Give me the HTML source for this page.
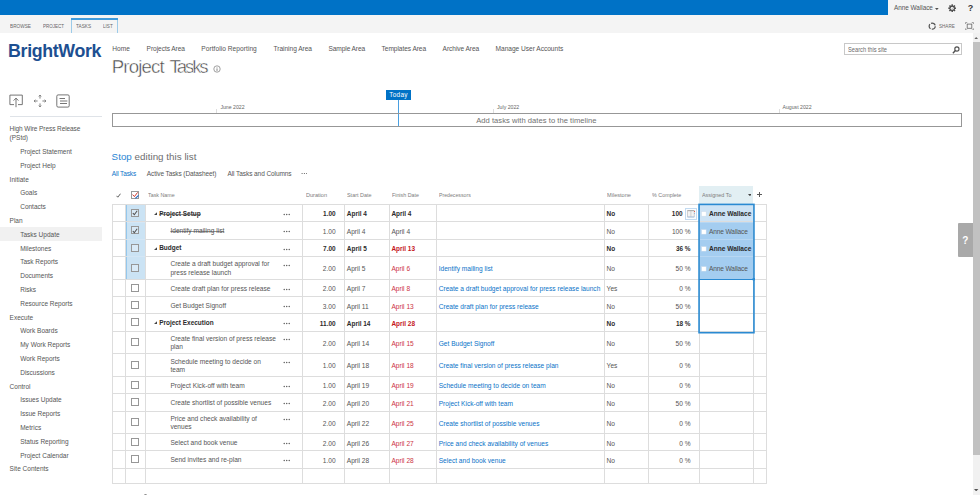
<!DOCTYPE html><html><head><meta charset="utf-8"><title>Project Tasks</title><style>
*{margin:0;padding:0;box-sizing:border-box}
html,body{width:980px;height:495px;overflow:hidden;background:#fff}
body{font-family:"Liberation Sans",sans-serif;position:relative;color:#444}
.a{position:absolute;white-space:nowrap}
.t{position:absolute;white-space:nowrap;height:10px;line-height:10px;font-size:6.6px;color:#555}
.b{font-weight:bold;color:#2b2b2b;font-size:6.45px}
.r{color:#cc3344}
.rb{color:#c4161c;font-weight:bold;font-size:6.45px}
.l{color:#0a73c8}
.h{font-size:6.2px;color:#7c7c7c}
.s{text-decoration:line-through;text-decoration-thickness:0.55px;text-decoration-color:rgba(70,70,70,.6)}
.vl{position:absolute;width:1px;background:#dddddd;top:204px;height:280px}
.hl{position:absolute;height:1px;background:#dddddd;left:112px;width:655px}
.cb{position:absolute;width:8px;height:8px;border:1px solid #979797;background:#fff}
.nv{color:#555;font-size:6.5px}
</style></head><body>
<div class="a" style="left:0;top:0;width:980px;height:33px;background:#f4f4f4"></div>
<div class="a" style="left:0;top:0;width:888px;height:15px;background:#0072c6"></div>
<span class="t " style="top:2.90px;left:894.10px;font-size:6.4px;letter-spacing:-0.038px;color:#555">Anne Wallace</span>
<svg class="a" style="left:935.10px;top:7.70px" width="3.7" height="2.1" viewBox="0 0 3.7 2.1"><path d="M0 0H3.7L1.85 2.1Z" fill="#505050"/></svg>
<svg class="a" style="left:948px;top:3.6px" width="8.4" height="8.4" viewBox="-4.2 -4.2 8.4 8.4"><g fill="#4d4d4d">
<circle r="2.75"/><rect x="-0.75" y="-3.9" width="1.5" height="2" transform="rotate(0)"/><rect x="-0.75" y="-3.9" width="1.5" height="2" transform="rotate(45)"/><rect x="-0.75" y="-3.9" width="1.5" height="2" transform="rotate(90)"/><rect x="-0.75" y="-3.9" width="1.5" height="2" transform="rotate(135)"/><rect x="-0.75" y="-3.9" width="1.5" height="2" transform="rotate(180)"/><rect x="-0.75" y="-3.9" width="1.5" height="2" transform="rotate(225)"/><rect x="-0.75" y="-3.9" width="1.5" height="2" transform="rotate(270)"/><rect x="-0.75" y="-3.9" width="1.5" height="2" transform="rotate(315)"/></g><circle r="1.55" fill="#f4f4f4"/><circle r="0.45" fill="#777"/></svg>
<span class="t " style="top:2.90px;left:967.80px;font-size:9px;font-weight:bold;color:#3a3a3a">?</span>
<svg class="a" style="left:928px;top:22px" width="8.4" height="8.4" viewBox="-4.2 -4.2 8.4 8.4"><circle r="3.05" fill="none" stroke="#555" stroke-width="1.25" stroke-dasharray="5.1 1.3"/></svg>
<span class="t " style="top:21.10px;left:938.90px;font-size:5.9px;transform:scaleX(0.7773);transform-origin:0 50%;color:#6a6a6a">SHARE</span>
<svg class="a" style="left:965px;top:21.5px" width="9" height="8.4" viewBox="0 0 9 8.4"><rect x="2.2" y="2.1" width="4.6" height="4.2" fill="none" stroke="#6e6e6e" stroke-width="0.85"/>
<path d="M0.5 2V0.5H2.2 M6.8 0.5H8.5V2 M8.5 6.4V7.9H6.8 M2.2 7.9H0.5V6.4" fill="none" stroke="#888" stroke-width="0.75"/></svg>
<span class="t " style="top:21.20px;left:9.90px;font-size:5.5px;transform:scaleX(0.8549);transform-origin:0 50%;color:#666">BROWSE</span>
<span class="t " style="top:21.20px;left:43.00px;font-size:5.5px;transform:scaleX(0.8181);transform-origin:0 50%;color:#666">PROJECT</span>
<span class="t " style="top:21.20px;left:76.40px;font-size:5.5px;transform:scaleX(0.8567);transform-origin:0 50%;color:#666">TASKS</span>
<span class="t " style="top:21.20px;left:102.80px;font-size:5.5px;transform:scaleX(0.8351);transform-origin:0 50%;color:#666">LIST</span>
<div class="a" style="left:71px;top:18px;width:47px;height:15px;border:1px solid #9ccbe9;border-top:0;border-bottom:0"></div>
<div class="a" style="left:71px;top:18px;width:47px;height:2px;background:#3f9bdb"></div>
<span class="a" style="left:8.1px;top:43.0px;font-size:17.8px;line-height:1;height:17.8px;font-weight:bold;color:#1d4f91;font-size:17.8px;letter-spacing:-0.358px;">BrightWork</span>
<span class="t " style="top:43.70px;left:112.30px;font-size:6.6px;letter-spacing:0.024px;color:#555">Home</span>
<span class="t " style="top:43.70px;left:146.60px;font-size:6.6px;letter-spacing:-0.066px;color:#555">Projects Area</span>
<span class="t " style="top:43.70px;left:201.30px;font-size:6.6px;letter-spacing:0.049px;color:#555">Portfolio Reporting</span>
<span class="t " style="top:43.70px;left:273.50px;font-size:6.6px;letter-spacing:-0.039px;color:#555">Training Area</span>
<span class="t " style="top:43.70px;left:328.50px;font-size:6.6px;letter-spacing:-0.108px;color:#555">Sample Area</span>
<span class="t " style="top:43.70px;left:381.60px;font-size:6.6px;letter-spacing:-0.071px;color:#555">Templates Area</span>
<span class="t " style="top:43.70px;left:442.60px;font-size:6.6px;letter-spacing:-0.068px;color:#555">Archive Area</span>
<span class="t " style="top:43.70px;left:495.60px;font-size:6.6px;letter-spacing:-0.027px;color:#555">Manage User Accounts</span>
<span class="a" style="left:111.7px;top:55.77px;font-size:18.6px;line-height:21px;height:21px;color:#444;-webkit-text-stroke:0.45px #fff;font-size:18.6px;letter-spacing:-0.798px;">Project</span>
<span class="a" style="left:169.6px;top:55.77px;font-size:18.6px;line-height:21px;height:21px;color:#444;-webkit-text-stroke:0.45px #fff;font-size:18.6px;letter-spacing:-2.129px;">Tasks</span>
<svg class="a" style="left:213px;top:64.8px" width="8" height="8" viewBox="0 0 8 8"><circle cx="4" cy="4" r="3.2" fill="none" stroke="#777" stroke-width="0.7"/><path d="M4 3.4V5.9" stroke="#666" stroke-width="0.8"/><circle cx="4" cy="2.4" r="0.45" fill="#666"/></svg>
<div class="a" style="left:844px;top:43px;width:118px;height:12px;border:1px solid #c8c8c8;background:#fff"></div>
<span class="t " style="top:45.30px;left:848.00px;font-size:6.5px;transform:scaleX(0.8776);transform-origin:0 50%;color:#6a6a6a">Search this site</span>
<svg class="a" style="left:951.6px;top:45.6px" width="8" height="8" viewBox="0 0 8 8"><circle cx="4.9" cy="3" r="2.1" fill="none" stroke="#505050" stroke-width="1.15"/><path d="M3.4 4.6L0.9 7.2" stroke="#505050" stroke-width="1.4"/></svg>
<svg class="a" style="left:9.2px;top:94px" width="14" height="14" viewBox="0 0 14 14" fill="none" stroke="#666" stroke-width="0.9">
<path d="M5 10.6H0.9V1.1H13.3V10.6H9"/><path d="M7 13.2V4.2M4.6 6.6L7 4.1L9.4 6.6"/></svg>
<svg class="a" style="left:33.2px;top:94px" width="14" height="14" viewBox="0 0 14 14" fill="none" stroke="#6a6a6a" stroke-width="0.85">
<path d="M7 1.2V4.6M7 9.4V12.8M1.2 7H4.6M9.4 7H12.8"/><path d="M5.8 2.4L7 1.1L8.2 2.4M5.8 11.6L7 12.9L8.2 11.6M2.4 5.8L1.1 7L2.4 8.2M11.6 5.8L12.9 7L11.6 8.2"/></svg>
<svg class="a" style="left:56px;top:94px" width="14" height="14" viewBox="0 0 14 14" fill="none" stroke="#666" stroke-width="0.9">
<rect x="0.8" y="0.9" width="12.4" height="12.2" rx="1.3"/><path d="M3.5 4.5H9M4 7H11.4M4 9.5H11"/></svg>
<div class="a" style="left:9.8px;top:116px;width:92px;height:1px;background:#dfe3e8"></div>
<span class="t nv" style="top:123.70px;left:9.60px;font-size:6.5px;letter-spacing:-0.083px;">High Wire Press Release</span>
<span class="t nv" style="top:132.60px;left:9.60px;">(PStd)</span>
<span class="t nv" style="top:147.00px;left:20.20px;">Project Statement</span>
<span class="t nv" style="top:160.80px;left:20.20px;">Project Help</span>
<span class="t nv" style="top:174.59px;left:9.60px;">Initiate</span>
<span class="t nv" style="top:188.39px;left:20.20px;">Goals</span>
<span class="t nv" style="top:202.18px;left:20.20px;">Contacts</span>
<span class="t nv" style="top:215.98px;left:9.60px;">Plan</span>
<div class="a" style="left:0;top:227.38px;width:101.8px;height:13.8px;background:#f1f1f1"></div>
<span class="t nv" style="top:229.78px;left:20.20px;">Tasks Update</span>
<span class="t nv" style="top:243.57px;left:20.20px;">Milestones</span>
<span class="t nv" style="top:257.37px;left:20.20px;">Task Reports</span>
<span class="t nv" style="top:271.16px;left:20.20px;">Documents</span>
<span class="t nv" style="top:284.96px;left:20.20px;">Risks</span>
<span class="t nv" style="top:298.76px;left:20.20px;">Resource Reports</span>
<span class="t nv" style="top:312.55px;left:9.60px;">Execute</span>
<span class="t nv" style="top:326.35px;left:20.20px;">Work Boards</span>
<span class="t nv" style="top:340.14px;left:20.20px;">My Work Reports</span>
<span class="t nv" style="top:353.94px;left:20.20px;">Work Reports</span>
<span class="t nv" style="top:367.74px;left:20.20px;">Discussions</span>
<span class="t nv" style="top:381.53px;left:9.60px;">Control</span>
<span class="t nv" style="top:395.33px;left:20.20px;">Issues Update</span>
<span class="t nv" style="top:409.12px;left:20.20px;">Issue Reports</span>
<span class="t nv" style="top:422.92px;left:20.20px;">Metrics</span>
<span class="t nv" style="top:436.72px;left:20.20px;">Status Reporting</span>
<span class="t nv" style="top:450.51px;left:20.20px;">Project Calendar</span>
<span class="t nv" style="top:464.31px;left:9.60px;">Site Contents</span>
<div class="a" style="left:386px;top:90px;width:25px;height:10px;background:#0072c6"></div>
<span class="t " style="top:90.00px;left:389.20px;font-size:6.4px;letter-spacing:0.304px;color:#fff">Today</span>
<div class="a" style="left:398px;top:100px;width:1px;height:26px;background:#4a9fe0"></div>
<div class="a" style="left:112px;top:113px;width:849.5px;height:14px;border:1px solid #979797"></div>
<span class="t " style="top:115.50px;left:476.20px;font-size:7.6px;letter-spacing:0.038px;color:#707070">Add tasks with dates to the timeline</span>
<span class="t " style="top:102.30px;left:220.40px;font-size:5.2px;color:#666">June 2022</span>
<div class="a" style="left:216px;top:108.5px;width:1px;height:4.5px;background:#dedede"></div>
<span class="t " style="top:102.30px;left:497.00px;font-size:5.2px;color:#666">July 2022</span>
<div class="a" style="left:492.5px;top:108.5px;width:1px;height:4.5px;background:#dedede"></div>
<span class="t " style="top:102.30px;left:782.50px;font-size:5.2px;color:#666">August 2022</span>
<div class="a" style="left:778.5px;top:108.5px;width:1px;height:4.5px;background:#dedede"></div>
<span class="a" style="left:111.6px;top:150.2px;font-size:9.8px;letter-spacing:0.02px;line-height:13px;color:#6e6e6e"><span style="color:#2b86d4">Stop</span> editing this list</span>
<span class="t l" style="top:169.20px;left:111.80px;font-size:6.5px;letter-spacing:-0.147px;">All Tasks</span>
<span class="t " style="top:169.20px;left:146.80px;font-size:6.5px;letter-spacing:-0.095px;">Active Tasks (Datasheet)</span>
<span class="t " style="top:169.20px;left:227.50px;font-size:6.5px;letter-spacing:-0.078px;">All Tasks and Columns</span>
<svg class="a" style="left:300.70px;top:172.30px" width="6.80" height="3" viewBox="0 0 6.80 3" fill="#595959"><circle cx="1.10" cy="1.5" r="0.60"/><circle cx="3.40" cy="1.5" r="0.60"/><circle cx="5.70" cy="1.5" r="0.60"/></svg>
<div class="a" style="left:125px;top:204px;width:21px;height:75px;background:#cbe3f4"></div>
<div class="a" style="left:125px;top:204px;width:2px;height:75px;background:#94c7ec"></div>
<div class="a" style="left:699px;top:186px;width:54px;height:18px;background:#e2eff3"></div>
<div class="a" style="left:699px;top:204px;width:54px;height:18px;background:#cde3f5"></div>
<div class="a" style="left:699px;top:222px;width:54px;height:57px;background:#a4cdf0"></div>
<div class="vl" style="left:112px"></div>
<div class="vl" style="left:125px"></div>
<div class="vl" style="left:145px"></div>
<div class="vl" style="left:302px"></div>
<div class="vl" style="left:344px"></div>
<div class="vl" style="left:389px"></div>
<div class="vl" style="left:436px"></div>
<div class="vl" style="left:604px"></div>
<div class="vl" style="left:648px"></div>
<div class="vl" style="left:699px"></div>
<div class="vl" style="left:753px"></div>
<div class="vl" style="left:766px"></div>
<div class="hl" style="top:204px"></div>
<div class="hl" style="top:221px"></div>
<div class="hl" style="top:239px"></div>
<div class="hl" style="top:256px"></div>
<div class="hl" style="top:279px"></div>
<div class="hl" style="top:296px"></div>
<div class="hl" style="top:313px"></div>
<div class="hl" style="top:331px"></div>
<div class="hl" style="top:353px"></div>
<div class="hl" style="top:376px"></div>
<div class="hl" style="top:393px"></div>
<div class="hl" style="top:411px"></div>
<div class="hl" style="top:433px"></div>
<div class="hl" style="top:450px"></div>
<div class="hl" style="top:468px"></div>
<div class="hl" style="top:483px"></div>
<div class="a" style="left:699px;top:222px;width:54px;height:1px;background:#b7d7f3"></div>
<div class="a" style="left:699px;top:239px;width:54px;height:1px;background:#b7d7f3"></div>
<div class="a" style="left:699px;top:256px;width:54px;height:1px;background:#b7d7f3"></div>
<div class="a" style="left:127px;top:222px;width:18px;height:1px;background:#d4e6f5"></div>
<div class="a" style="left:127px;top:239px;width:18px;height:1px;background:#d4e6f5"></div>
<div class="a" style="left:127px;top:256px;width:18px;height:1px;background:#d4e6f5"></div>
<svg class="a" style="left:697px;top:202px" width="59" height="132" viewBox="0 0 59 132"><rect x="2.05" y="2.4" width="54.9" height="128.3" fill="none" stroke="#2a8ad2" stroke-width="1.6"/><rect x="55.6" y="76" width="2.4" height="2.4" fill="#2a8ad2"/></svg>
<div class="a" style="left:699px;top:278.6px;width:54px;height:1.2px;background:#2a8ad2"></div>
<svg class="a" style="left:116px;top:192.6px" width="5" height="5" viewBox="0 0 5 5"><path d="M0.5 2.8L1.8 4.2L4.5 0.7" fill="none" stroke="#606060" stroke-width="1"/></svg>
<div class="cb" style="left:131px;top:190.6px;border-color:#999"></div>
<svg class="a" style="left:132.4px;top:191.5px" width="8" height="8" viewBox="0 0 8 8"><path d="M0.6 2.6L2.4 4.6L5.6 0.4" fill="none" stroke="#d0392e" stroke-width="1"/><path d="M3.4 6.4L6.6 3.4" stroke="#2b6cc4" stroke-width="1.3"/></svg>
<span class="t h" style="top:189.80px;left:147.90px;font-size:6.2px;transform:scaleX(0.8610);transform-origin:0 50%;">Task Name</span>
<span class="t h" style="top:189.80px;left:305.70px;font-size:6.2px;transform:scaleX(0.9004);transform-origin:0 50%;">Duration</span>
<span class="t h" style="top:189.80px;left:346.90px;font-size:6.2px;transform:scaleX(0.8778);transform-origin:0 50%;">Start Date</span>
<span class="t h" style="top:189.80px;left:391.90px;font-size:6.2px;transform:scaleX(0.8579);transform-origin:0 50%;">Finish Date</span>
<span class="t h" style="top:189.80px;left:439.00px;font-size:6.2px;transform:scaleX(0.8389);transform-origin:0 50%;">Predecessors</span>
<span class="t h" style="top:189.80px;left:607.00px;font-size:6.2px;transform:scaleX(0.9045);transform-origin:0 50%;">Milestone</span>
<span class="t h" style="top:189.80px;left:651.60px;font-size:6.2px;transform:scaleX(0.8706);transform-origin:0 50%;">% Complete</span>
<span class="t h" style="top:189.80px;left:701.50px;font-size:6.2px;transform:scaleX(0.8763);transform-origin:0 50%;">Assigned To</span>
<svg class="a" style="left:747.50px;top:193.70px" width="3.8" height="2.2" viewBox="0 0 3.8 2.2"><path d="M0 0H3.8L1.9 2.2Z" fill="#444"/></svg>
<div class="a" style="left:757.2px;top:194.3px;width:5px;height:0.8px;background:#5a5a5a"></div><div class="a" style="left:759.3px;top:192.2px;width:0.8px;height:5px;background:#5a5a5a"></div>
<div class="cb" style="left:131px;top:208.95px;background:#d9eaf7"></div>
<svg class="a" style="left:132.2px;top:210.15px" width="6" height="6" viewBox="0 0 6 6"><path d="M0.8 3L2.3 4.7L5.2 0.8" fill="none" stroke="#505050" stroke-width="1.05"/></svg>
<svg class="a" style="left:153.9px;top:211.95px" width="3.2" height="3" viewBox="0 0 3.2 3"><path d="M3.2 0V3H0Z" fill="#444"/></svg>
<span class="t b s" style="top:208.65px;left:159.20px;">Project Setup</span>
<svg class="a" style="left:282.70px;top:212.75px" width="7.45" height="3" viewBox="0 0 7.45 3" fill="#595959"><circle cx="1.23" cy="1.5" r="0.72"/><circle cx="3.73" cy="1.5" r="0.72"/><circle cx="6.22" cy="1.5" r="0.72"/></svg>
<span class="t b" style="top:209.25px;right:644.40px;">1.00</span>
<span class="t b" style="top:209.25px;left:346.80px;">April 4</span>
<span class="t b" style="top:209.25px;left:391.40px;">April 4</span>
<span class="t b" style="top:209.25px;left:606.60px;">No</span>
<span class="t b" style="top:209.25px;right:297.40px;">100</span>
<div class="a" style="left:685.2px;top:207.85px;width:11.4px;height:11.8px;border:1px solid #c3dbf1;background:#fbfdff"></div>
<svg class="a" style="left:686.6px;top:209.65px" width="8.4" height="8" viewBox="0 0 8.4 8" fill="none" stroke="#bdbdbd" stroke-width="0.7"><path d="M0.5 0.6H7.3V7H0.5Z" fill="#f4f4f4"/><path d="M3.9 0.6V7"/><path d="M0.5 0.6H7.3" stroke="#a8a8a8" stroke-width="0.9"/><path d="M0.5 7H7.3" stroke="#9fc3ea" stroke-width="0.8"/><circle cx="7.6" cy="1.5" r="0.55" fill="#e0443a" stroke="none"/><circle cx="7.6" cy="3.6" r="0.45" fill="#5b8fd6" stroke="none"/></svg>
<svg class="a" style="left:700.9px;top:211.25px" width="6" height="6" viewBox="0 0 6 6"><rect x="0.6" y="0.7" width="4.5" height="4.4" fill="#fff" stroke="#cfdcea" stroke-width="0.4"/></svg>
<span class="t b" style="top:209.25px;left:709.10px;font-size:6.6px;letter-spacing:-0.039px;">Anne Wallace</span>
<div class="cb" style="left:131px;top:226.45px;background:#d9eaf7"></div>
<svg class="a" style="left:132.2px;top:227.65px" width="6" height="6" viewBox="0 0 6 6"><path d="M0.8 3L2.3 4.7L5.2 0.8" fill="none" stroke="#505050" stroke-width="1.05"/></svg>
<span class="t  s" style="top:226.15px;left:170.40px;">Identify mailing list</span>
<svg class="a" style="left:282.70px;top:230.25px" width="7.45" height="3" viewBox="0 0 7.45 3" fill="#595959"><circle cx="1.23" cy="1.5" r="0.72"/><circle cx="3.73" cy="1.5" r="0.72"/><circle cx="6.22" cy="1.5" r="0.72"/></svg>
<span class="t " style="top:226.75px;right:644.40px;">1.00</span>
<span class="t " style="top:226.75px;left:346.80px;">April 4</span>
<span class="t " style="top:226.75px;left:391.40px;">April 4</span>
<span class="t " style="top:226.75px;left:606.60px;">No</span>
<span class="t " style="top:226.75px;right:289.40px;">100 %</span>
<svg class="a" style="left:700.9px;top:228.75px" width="6" height="6" viewBox="0 0 6 6"><rect x="0.6" y="0.7" width="4.5" height="4.4" fill="#fff" stroke="#cfdcea" stroke-width="0.4"/></svg>
<span class="t " style="top:226.75px;left:709.10px;font-size:6.6px;letter-spacing:-0.156px;">Anne Wallace</span>
<div class="cb" style="left:131px;top:243.70px;background:#d9eaf7"></div>
<svg class="a" style="left:153.9px;top:246.70px" width="3.2" height="3" viewBox="0 0 3.2 3"><path d="M3.2 0V3H0Z" fill="#444"/></svg>
<span class="t b" style="top:243.40px;left:159.20px;">Budget</span>
<svg class="a" style="left:282.70px;top:247.50px" width="7.45" height="3" viewBox="0 0 7.45 3" fill="#595959"><circle cx="1.23" cy="1.5" r="0.72"/><circle cx="3.73" cy="1.5" r="0.72"/><circle cx="6.22" cy="1.5" r="0.72"/></svg>
<span class="t b" style="top:244.00px;right:644.40px;">7.00</span>
<span class="t b" style="top:244.00px;left:346.80px;">April 5</span>
<span class="t rb" style="top:244.00px;left:391.40px;">April 13</span>
<span class="t b" style="top:244.00px;left:606.60px;">No</span>
<span class="t b" style="top:244.00px;right:289.40px;">36 %</span>
<svg class="a" style="left:700.9px;top:246.00px" width="6" height="6" viewBox="0 0 6 6"><rect x="0.6" y="0.7" width="4.5" height="4.4" fill="#fff" stroke="#cfdcea" stroke-width="0.4"/></svg>
<span class="t b" style="top:244.00px;left:709.10px;font-size:6.6px;letter-spacing:-0.039px;">Anne Wallace</span>
<div class="cb" style="left:131px;top:263.70px;background:#d9eaf7"></div>
<span class="t " style="top:259.30px;left:170.40px;">Create a draft budget approval for</span>
<span class="t " style="top:267.70px;left:170.40px;">press release launch</span>
<svg class="a" style="left:282.70px;top:263.60px" width="7.45" height="3" viewBox="0 0 7.45 3" fill="#595959"><circle cx="1.23" cy="1.5" r="0.72"/><circle cx="3.73" cy="1.5" r="0.72"/><circle cx="6.22" cy="1.5" r="0.72"/></svg>
<span class="t " style="top:264.00px;right:644.40px;">2.00</span>
<span class="t " style="top:264.00px;left:346.80px;">April 5</span>
<span class="t r" style="top:264.00px;left:391.40px;">April 6</span>
<span class="t l" style="top:264.00px;left:438.70px;">Identify mailing list</span>
<span class="t " style="top:264.00px;left:606.60px;">No</span>
<span class="t " style="top:264.00px;right:289.40px;">50 %</span>
<svg class="a" style="left:700.9px;top:266.00px" width="6" height="6" viewBox="0 0 6 6"><rect x="0.6" y="0.7" width="4.5" height="4.4" fill="#fff" stroke="#cfdcea" stroke-width="0.4"/></svg>
<span class="t " style="top:264.00px;left:709.10px;font-size:6.6px;letter-spacing:-0.156px;">Anne Wallace</span>
<div class="cb" style="left:131px;top:283.95px"></div>
<span class="t " style="top:283.65px;left:170.40px;">Create draft plan for press release</span>
<svg class="a" style="left:282.70px;top:287.75px" width="7.45" height="3" viewBox="0 0 7.45 3" fill="#595959"><circle cx="1.23" cy="1.5" r="0.72"/><circle cx="3.73" cy="1.5" r="0.72"/><circle cx="6.22" cy="1.5" r="0.72"/></svg>
<span class="t " style="top:284.25px;right:644.40px;">2.00</span>
<span class="t " style="top:284.25px;left:346.80px;">April 7</span>
<span class="t r" style="top:284.25px;left:391.40px;">April 8</span>
<span class="t l" style="top:284.25px;left:438.70px;">Create a draft budget approval for press release launch</span>
<span class="t " style="top:284.25px;left:606.60px;">Yes</span>
<span class="t " style="top:284.25px;right:289.40px;">0 %</span>
<div class="cb" style="left:131px;top:301.20px"></div>
<span class="t " style="top:300.90px;left:170.40px;">Get Budget Signoff</span>
<svg class="a" style="left:282.70px;top:305.00px" width="7.45" height="3" viewBox="0 0 7.45 3" fill="#595959"><circle cx="1.23" cy="1.5" r="0.72"/><circle cx="3.73" cy="1.5" r="0.72"/><circle cx="6.22" cy="1.5" r="0.72"/></svg>
<span class="t " style="top:301.50px;right:644.40px;">3.00</span>
<span class="t " style="top:301.50px;left:346.80px;">April 11</span>
<span class="t r" style="top:301.50px;left:391.40px;">April 13</span>
<span class="t l" style="top:301.50px;left:438.70px;">Create draft plan for press release</span>
<span class="t " style="top:301.50px;left:606.60px;">No</span>
<span class="t " style="top:301.50px;right:289.40px;">50 %</span>
<div class="cb" style="left:131px;top:318.45px"></div>
<svg class="a" style="left:153.9px;top:321.45px" width="3.2" height="3" viewBox="0 0 3.2 3"><path d="M3.2 0V3H0Z" fill="#444"/></svg>
<span class="t b" style="top:318.15px;left:159.20px;">Project Execution</span>
<svg class="a" style="left:282.70px;top:322.25px" width="7.45" height="3" viewBox="0 0 7.45 3" fill="#595959"><circle cx="1.23" cy="1.5" r="0.72"/><circle cx="3.73" cy="1.5" r="0.72"/><circle cx="6.22" cy="1.5" r="0.72"/></svg>
<span class="t b" style="top:318.75px;right:644.40px;">11.00</span>
<span class="t b" style="top:318.75px;left:346.80px;">April 14</span>
<span class="t rb" style="top:318.75px;left:391.40px;">April 28</span>
<span class="t b" style="top:318.75px;left:606.60px;">No</span>
<span class="t b" style="top:318.75px;right:289.40px;">18 %</span>
<div class="cb" style="left:131px;top:338.45px"></div>
<span class="t " style="top:334.05px;left:170.40px;">Create final version of press release</span>
<span class="t " style="top:342.45px;left:170.40px;">plan</span>
<svg class="a" style="left:282.70px;top:338.35px" width="7.45" height="3" viewBox="0 0 7.45 3" fill="#595959"><circle cx="1.23" cy="1.5" r="0.72"/><circle cx="3.73" cy="1.5" r="0.72"/><circle cx="6.22" cy="1.5" r="0.72"/></svg>
<span class="t " style="top:338.75px;right:644.40px;">2.00</span>
<span class="t " style="top:338.75px;left:346.80px;">April 14</span>
<span class="t r" style="top:338.75px;left:391.40px;">April 15</span>
<span class="t l" style="top:338.75px;left:438.70px;">Get Budget Signoff</span>
<span class="t " style="top:338.75px;left:606.60px;">No</span>
<span class="t " style="top:338.75px;right:289.40px;">50 %</span>
<div class="cb" style="left:131px;top:360.95px"></div>
<span class="t " style="top:356.55px;left:170.40px;">Schedule meeting to decide on</span>
<span class="t " style="top:364.95px;left:170.40px;">team</span>
<svg class="a" style="left:282.70px;top:360.85px" width="7.45" height="3" viewBox="0 0 7.45 3" fill="#595959"><circle cx="1.23" cy="1.5" r="0.72"/><circle cx="3.73" cy="1.5" r="0.72"/><circle cx="6.22" cy="1.5" r="0.72"/></svg>
<span class="t " style="top:361.25px;right:644.40px;">1.00</span>
<span class="t " style="top:361.25px;left:346.80px;">April 18</span>
<span class="t r" style="top:361.25px;left:391.40px;">April 18</span>
<span class="t l" style="top:361.25px;left:438.70px;">Create final version of press release plan</span>
<span class="t " style="top:361.25px;left:606.60px;">Yes</span>
<span class="t " style="top:361.25px;right:289.40px;">0 %</span>
<div class="cb" style="left:131px;top:380.95px"></div>
<span class="t " style="top:380.65px;left:170.40px;">Project Kick-off with team</span>
<svg class="a" style="left:282.70px;top:384.75px" width="7.45" height="3" viewBox="0 0 7.45 3" fill="#595959"><circle cx="1.23" cy="1.5" r="0.72"/><circle cx="3.73" cy="1.5" r="0.72"/><circle cx="6.22" cy="1.5" r="0.72"/></svg>
<span class="t " style="top:381.25px;right:644.40px;">1.00</span>
<span class="t " style="top:381.25px;left:346.80px;">April 19</span>
<span class="t r" style="top:381.25px;left:391.40px;">April 19</span>
<span class="t l" style="top:381.25px;left:438.70px;">Schedule meeting to decide on team</span>
<span class="t " style="top:381.25px;left:606.60px;">No</span>
<span class="t " style="top:381.25px;right:289.40px;">0 %</span>
<div class="cb" style="left:131px;top:398.45px"></div>
<span class="t " style="top:398.15px;left:170.40px;">Create shortlist of possible venues</span>
<svg class="a" style="left:282.70px;top:402.25px" width="7.45" height="3" viewBox="0 0 7.45 3" fill="#595959"><circle cx="1.23" cy="1.5" r="0.72"/><circle cx="3.73" cy="1.5" r="0.72"/><circle cx="6.22" cy="1.5" r="0.72"/></svg>
<span class="t " style="top:398.75px;right:644.40px;">2.00</span>
<span class="t " style="top:398.75px;left:346.80px;">April 20</span>
<span class="t r" style="top:398.75px;left:391.40px;">April 21</span>
<span class="t l" style="top:398.75px;left:438.70px;">Project Kick-off with team</span>
<span class="t " style="top:398.75px;left:606.60px;">No</span>
<span class="t " style="top:398.75px;right:289.40px;">50 %</span>
<div class="cb" style="left:131px;top:418.45px"></div>
<span class="t " style="top:414.05px;left:170.40px;">Price and check availability of</span>
<span class="t " style="top:422.45px;left:170.40px;">venues</span>
<svg class="a" style="left:282.70px;top:418.35px" width="7.45" height="3" viewBox="0 0 7.45 3" fill="#595959"><circle cx="1.23" cy="1.5" r="0.72"/><circle cx="3.73" cy="1.5" r="0.72"/><circle cx="6.22" cy="1.5" r="0.72"/></svg>
<span class="t " style="top:418.75px;right:644.40px;">2.00</span>
<span class="t " style="top:418.75px;left:346.80px;">April 22</span>
<span class="t r" style="top:418.75px;left:391.40px;">April 25</span>
<span class="t l" style="top:418.75px;left:438.70px;">Create shortlist of possible venues</span>
<span class="t " style="top:418.75px;left:606.60px;">No</span>
<span class="t " style="top:418.75px;right:289.40px;">0 %</span>
<div class="cb" style="left:131px;top:438.20px"></div>
<span class="t " style="top:437.90px;left:170.40px;">Select and book venue</span>
<svg class="a" style="left:282.70px;top:442.00px" width="7.45" height="3" viewBox="0 0 7.45 3" fill="#595959"><circle cx="1.23" cy="1.5" r="0.72"/><circle cx="3.73" cy="1.5" r="0.72"/><circle cx="6.22" cy="1.5" r="0.72"/></svg>
<span class="t " style="top:438.50px;right:644.40px;">2.00</span>
<span class="t " style="top:438.50px;left:346.80px;">April 26</span>
<span class="t r" style="top:438.50px;left:391.40px;">April 27</span>
<span class="t l" style="top:438.50px;left:438.70px;">Price and check availability of venues</span>
<span class="t " style="top:438.50px;left:606.60px;">No</span>
<span class="t " style="top:438.50px;right:289.40px;">0 %</span>
<div class="cb" style="left:131px;top:455.45px"></div>
<span class="t " style="top:455.15px;left:170.40px;">Send invites and re-plan</span>
<svg class="a" style="left:282.70px;top:459.25px" width="7.45" height="3" viewBox="0 0 7.45 3" fill="#595959"><circle cx="1.23" cy="1.5" r="0.72"/><circle cx="3.73" cy="1.5" r="0.72"/><circle cx="6.22" cy="1.5" r="0.72"/></svg>
<span class="t " style="top:455.75px;right:644.40px;">1.00</span>
<span class="t " style="top:455.75px;left:346.80px;">April 28</span>
<span class="t r" style="top:455.75px;left:391.40px;">April 28</span>
<span class="t l" style="top:455.75px;left:438.70px;">Select and book venue</span>
<span class="t " style="top:455.75px;left:606.60px;">No</span>
<span class="t " style="top:455.75px;right:289.40px;">0 %</span>
<div class="a" style="left:143.6px;top:493.6px;width:3.6px;height:2px;background:#8a8a8a;border-radius:1.5px 1.5px 0 0"></div>
<div class="a" style="left:958px;top:223px;width:15px;height:34px;background:#a9a9a9;border-radius:1px 0 0 1px"></div>
<span class="t " style="top:235.70px;left:962.30px;font-size:10px;font-weight:bold;color:#fff">?</span>
<div class="a" style="left:972.5px;top:33px;width:7.5px;height:462px;background:#f1f1f1"></div>
<div class="a" style="left:973px;top:42px;width:7px;height:412.5px;background:#c1c1c1"></div>
<svg class="a" style="left:974.20px;top:36.60px" width="4.4" height="2.4" viewBox="0 0 4.4 2.4"><path d="M0 2.4H4.4L2.2 0Z" fill="#666"/></svg>
<svg class="a" style="left:974.20px;top:488.80px" width="4.4" height="2.4" viewBox="0 0 4.4 2.4"><path d="M0 0H4.4L2.2 2.4Z" fill="#555"/></svg>
</body></html>
